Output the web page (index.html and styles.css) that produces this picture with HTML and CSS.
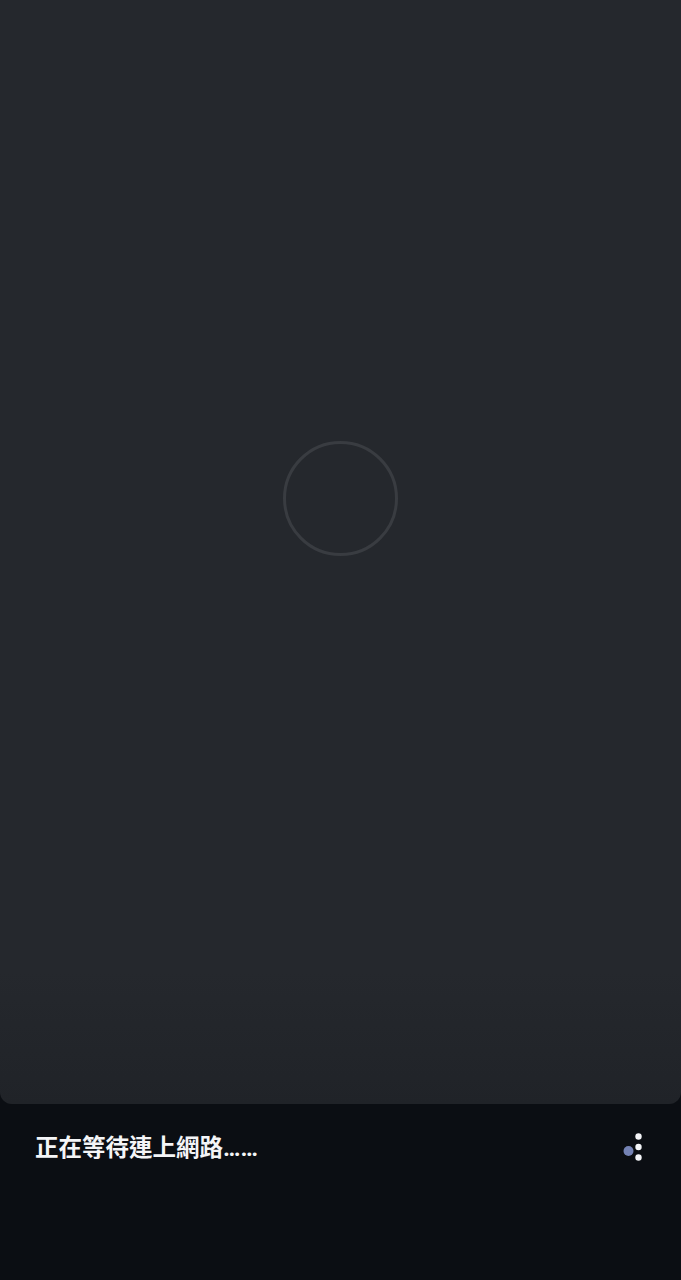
FILE: index.html
```html
<!DOCTYPE html>
<html lang="zh-Hant">

<head>
    <meta charset="UTF-8">
    <title>正在等待連上網路</title>
    <meta name="viewport" content="width=device-width, initial-scale=1.0">
    <link rel="stylesheet" href="styles.css">
</head>

<body>
    <div class="panel">
        <div class="spinner"></div>
    </div>

    <div class="footer">
        <span class="status">正在等待連上網路……</span>
        <svg class="menu" width="24" height="32" viewBox="0 0 24 32">
            <circle cx="6.5" cy="19" r="5" fill="#7482b4"/>
            <circle cx="16.5" cy="4.5" r="3.2" fill="#f4f5f8"/>
            <circle cx="16.5" cy="15" r="3.2" fill="#f4f5f8"/>
            <circle cx="16.5" cy="25.5" r="3.2" fill="#f4f5f8"/>
        </svg>
    </div>
</body>

</html>
```

FILE: styles.css
```css
body {
    margin: 0;
    width: 681px;
    height: 1280px;
    background-color: #0b0e13;
    display: flex;
    flex-direction: column;
    overflow: hidden;
}

.panel {
    height: 1104px;
    padding-bottom: 107px;
    box-sizing: border-box;
    background: linear-gradient(#25282d 88%, #202328);
    border-radius: 0 0 12px 12px;
    display: flex;
    justify-content: center;
    align-items: center;
}

.spinner {
    width: 115px;
    height: 115px;
    box-sizing: border-box;
    border: 3px solid #393c41;
    border-radius: 50%;
}

.footer {
    display: flex;
    justify-content: space-between;
    align-items: center;
    padding: 28px 35px 0 35px;
}

.status {
    font-family: "Roboto", "Noto Sans CJK TC", sans-serif;
    font-size: 23.5px;
    font-weight: 700;
    line-height: 29px;
    color: #f4f5f7;
}

.menu {
    display: block;
}
```
